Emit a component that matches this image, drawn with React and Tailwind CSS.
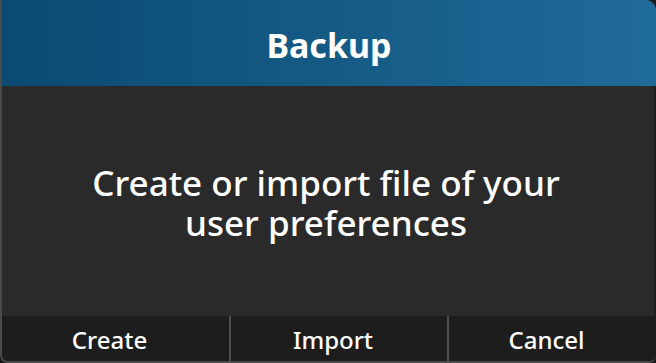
import React from 'react';

const buttons = [
  { label: 'Create', width: 'w-[227px]' },
  { label: 'Import', width: 'w-[218px]' },
  { label: 'Cancel', width: 'flex-1' },
];

export default function App() {
  return (
    <div className="w-[656px] h-[363px] bg-[#1a1a1a] font-['Noto_Sans','Open_Sans',sans-serif]">
      <div className="flex flex-col w-full h-full rounded-tr-[10px] rounded-b-[8px] overflow-hidden border-l-2 border-b-2 border-[#4a4a4a]">
        {/* Header */}
        <div className="h-[86px] shrink-0 flex items-center justify-center bg-gradient-to-r from-[#0a4a72] to-[#1f6b99]">
          <h1 className="text-white text-[34px] font-bold leading-none pt-[4px]">Backup</h1>
        </div>

        {/* Message */}
        <div className="flex-1 flex items-center justify-center bg-[#2a2a2a] border-r-2 border-[#1e1e1e]">
          <p className="text-white text-[35px] font-medium leading-[40px] text-center pt-[4px] pr-[4px]">
            Create or import file of your
            <br />
            user preferences
          </p>
        </div>

        {/* Actions */}
        <div className="h-[45px] shrink-0 flex bg-[#1d1d1d]">
          {buttons.map((b, i) => (
            <div
              key={b.label}
              className={`${b.width} flex items-center justify-center text-white text-[24px] font-medium pt-[2px] pr-[12px] ${i > 0 ? 'border-l-2 border-[#4f4f4f]' : ''}`}
            >
              {b.label}
            </div>
          ))}
        </div>
      </div>
    </div>
  );
}
